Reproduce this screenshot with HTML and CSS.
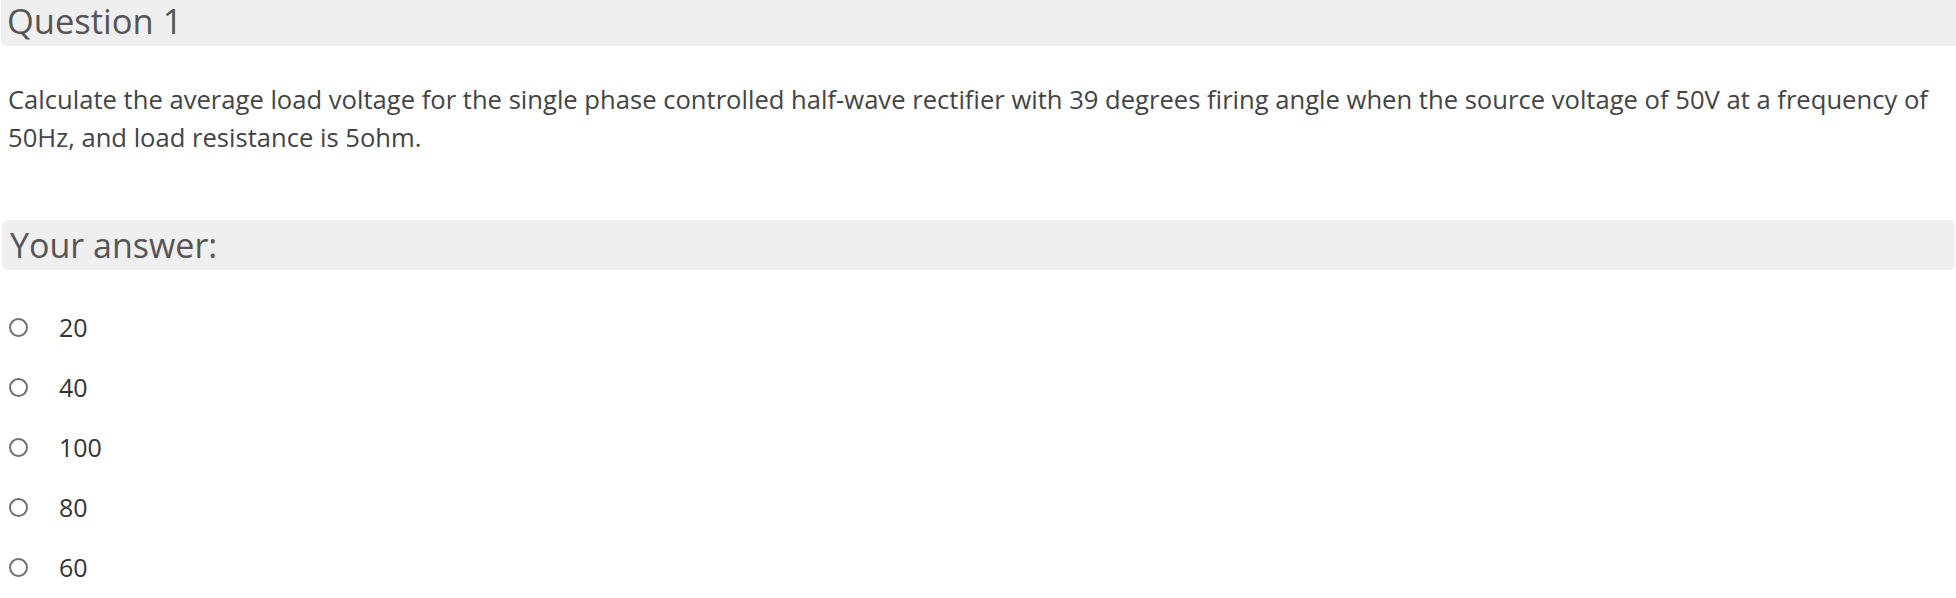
FILE: index.html
```html
<!DOCTYPE html>
<html>
<head>
<meta charset="utf-8">
<link rel="stylesheet" href="styles.css">
</head>
<body>
<div class="page">
  <div class="qhead">Question 1</div>
  <div class="qtext">Calculate the average load voltage for the single phase controlled half-wave rectifier with 39 degrees firing angle when the source voltage of 50V at a frequency of 50Hz, and load resistance is 5ohm.</div>
  <div class="ahead">Your answer:</div>
  <div class="options">
    <label class="opt"><span class="radio"></span><span class="val">20</span></label>
    <label class="opt"><span class="radio"></span><span class="val">40</span></label>
    <label class="opt"><span class="radio"></span><span class="val">100</span></label>
    <label class="opt"><span class="radio"></span><span class="val">80</span></label>
    <label class="opt"><span class="radio"></span><span class="val">60</span></label>
  </div>
</div>
</body>
</html>
```
FILE: styles.css
```css
html, body {
  margin: 0;
  padding: 0;
  background: #fff;
}
body {
  font-family: "Open Sans", "Liberation Sans", sans-serif;
  color: #444;
}
.page {
  padding: 0 1px 0 1px;
}
.qhead {
  background: #efefef;
  height: 46px;
  margin-right: -1px;
  border-radius: 0 0 0 6px;
  font-size: 34.5px;
  line-height: 42px;
  padding-left: 6px;
  color: #555;
  box-sizing: border-box;
}
.qtext {
  font-size: 25.6px;
  line-height: 38px;
  padding: 35px 6px 0 7px;
  color: #444;
}
.ahead {
  margin-top: 63px;
  margin-left: 1px;
  height: 50px;
  background: #efefef;
  border-radius: 6px;
  font-size: 34px;
  line-height: 50px;
  padding-left: 8px;
  color: #555;
}
.options {
  display: flex;
  flex-direction: column;
  padding-top: 27px;
}
.opt {
  display: flex;
  align-items: center;
  height: 60px;
  padding-left: 8px;
  font-size: 25px;
  color: #333;
}
.radio {
  width: 15px;
  height: 15px;
  border: 2px solid #707070;
  border-radius: 50%;
  box-sizing: content-box;
  flex: none;
}
.val {
  margin-left: 31px;
}
```
